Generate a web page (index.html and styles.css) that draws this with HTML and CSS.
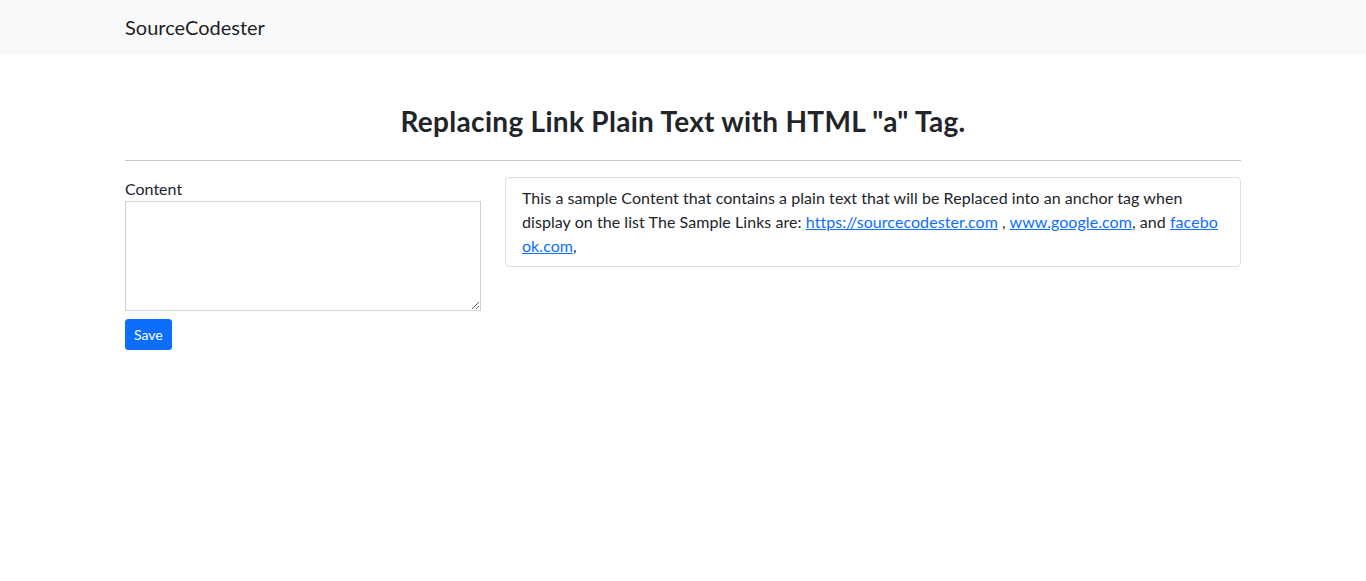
FILE: index.html
```html
<!DOCTYPE html>
<html lang="en">
<head>
<meta charset="utf-8">
<title>Replacing Link Plain Text with HTML "a" Tag.</title>
<link rel="stylesheet" href="styles.css">
</head>
<body>
<nav class="navbar">
  <div class="container">
    <a class="brand" href="#">SourceCodester</a>
  </div>
</nav>
<main class="container page">
  <h3 class="title">Replacing Link Plain Text with HTML "a" Tag.</h3>
  <hr class="divider">
  <div class="row">
    <div class="col col-form">
      <form class="content-form">
        <label class="field-label" for="content">Content</label>
        <textarea id="content" class="field-input"></textarea>
        <button type="button" class="btn-save">Save</button>
      </form>
    </div>
    <div class="col col-list">
      <div class="card">
        <div class="card-body">This a sample Content that contains a plain text that will be Replaced into an anchor tag when display on the list The Sample Links are: <a href="#" class="link">https://sourcecodester.com</a> , <a href="#" class="link">www.google.com</a>, and <a href="#" class="link">facebook.com</a>,</div>
      </div>
    </div>
  </div>
</main>
</body>
</html>
```
FILE: styles.css
```css
* { box-sizing: border-box; }
body {
  margin: 0;
  font-family: Lato, "Noto Sans", sans-serif;
  font-size: 16px;
  line-height: 1.5;
  color: #212529;
  background: #fff;
}
.container {
  max-width: 1140px;
  margin: 0 auto;
  padding: 0 12px;
}
.navbar {
  background: #f8f9fa;
  height: 55px;
  display: flex;
  align-items: center;
}
.navbar .container { width: 100%; }
.brand {
  font-size: 20px;
  line-height: 30px;
  color: rgba(0,0,0,.9);
  text-decoration: none;
  position: relative;
  top: -1px;
}
.page { padding-top: 50px; }
.title {
  margin: 0 0 21px;
  font-size: 28px;
  line-height: 1.2;
  font-weight: 700;
  letter-spacing: 0.3px;
  text-align: center;
}
.divider {
  margin: 16px 0;
  border: 0;
  border-top: 1px solid rgba(33,37,41,.25);
}
.row {
  display: flex;
  margin: 0 -12px;
}
.col { padding: 0 12px; }
.col-form { flex: 0 0 33.3333%; }
.col-list { flex: 0 0 66.6667%; }
.field-label { display: block; }
.field-input {
  display: block;
  width: 100%;
  height: 110px;
  border: 1px solid #ced4da;
  border-radius: 0;
  font: inherit;
}
.btn-save {
  margin-top: 8px;
  background: #0d6efd;
  color: #fff;
  border: 1px solid #0d6efd;
  border-radius: 3px;
  font-family: inherit;
  font-size: 14px;
  line-height: 21px;
  padding: 4px 8px;
}
.card {
  border: 1px solid rgba(0,0,0,.125);
  border-radius: 4px;
}
.card-body {
  padding: 8px 16px;
  letter-spacing: 0.06px;
}
.link {
  color: #0d6efd;
  text-decoration: underline;
  word-break: break-all;
}
```
